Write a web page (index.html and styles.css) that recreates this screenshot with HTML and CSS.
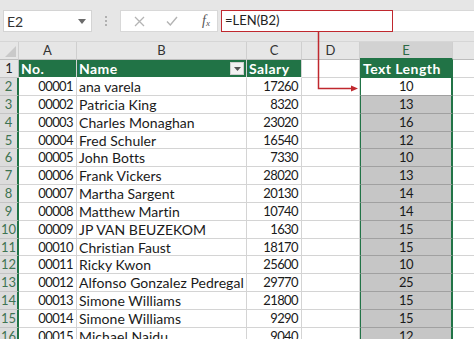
FILE: index.html
```html
<!DOCTYPE html>
<html>
<head>
<meta charset="utf-8">
<link rel="stylesheet" href="styles.css">
</head>
<body>
<div class="app">
  <div class="toolbar">
    <div class="namebox"><span>E2</span><svg class="caret" width="8" height="5" viewBox="0 0 8 5"><path d="M0 0H8L4 5Z" fill="#6b6b6b"/></svg></div>
    <div class="sep"><i></i><i></i><i></i></div>
    <div class="fxbox">
      <svg class="ico" width="11" height="11" viewBox="0 0 11 11"><path d="M1 1L10 10M10 1L1 10" stroke="#b4b4b4" stroke-width="1.3" fill="none"/></svg>
      <svg class="ico" width="12" height="10" viewBox="0 0 12 10"><path d="M1 5.5L4.3 9L11 1" stroke="#b4b4b4" stroke-width="1.4" fill="none"/></svg>
      <span class="fx">f<sub>x</sub></span>
    </div>
    <div class="formula"><div class="formula-sel">=LEN(B2)</div></div>
  </div>
  <div class="sheet">
    <div class="corner"><svg width="11" height="11" viewBox="0 0 11 11"><path d="M11 0V11H0Z" fill="#c9c9c9"/></svg></div>
    <div class="ch">A</div><div class="ch">B</div><div class="ch">C</div><div class="ch">D</div><div class="ch ch-sel">E</div><div class="ch ch-last"></div>

    <div class="rh rh1">1</div>
    <div class="c hd">No.</div>
    <div class="c hd hd-name">Name<span class="filter"><svg width="7" height="4" viewBox="0 0 7 4"><path d="M0 0H7L3.5 4Z" fill="#555"/></svg></span></div>
    <div class="c hd">Salary</div>
    <div class="c"></div>
    <div class="c hd hd-e">Text Length</div>
    <div class="c last"></div>

    <div class="rh">2</div><div class="c num">00001</div><div class="c txt">ana varela</div><div class="c num">17260</div><div class="c"></div><div class="c e active">10</div><div class="c last"></div>
    <div class="rh">3</div><div class="c num">00002</div><div class="c txt">Patricia King</div><div class="c num">8320</div><div class="c"></div><div class="c e">13</div><div class="c last"></div>
    <div class="rh">4</div><div class="c num">00003</div><div class="c txt">Charles Monaghan</div><div class="c num">23020</div><div class="c"></div><div class="c e">16</div><div class="c last"></div>
    <div class="rh">5</div><div class="c num">00004</div><div class="c txt">Fred Schuler</div><div class="c num">16540</div><div class="c"></div><div class="c e">12</div><div class="c last"></div>
    <div class="rh">6</div><div class="c num">00005</div><div class="c txt">John Botts</div><div class="c num">7330</div><div class="c"></div><div class="c e">10</div><div class="c last"></div>
    <div class="rh">7</div><div class="c num">00006</div><div class="c txt">Frank Vickers</div><div class="c num">28020</div><div class="c"></div><div class="c e">13</div><div class="c last"></div>
    <div class="rh">8</div><div class="c num">00007</div><div class="c txt">Martha Sargent</div><div class="c num">20130</div><div class="c"></div><div class="c e">14</div><div class="c last"></div>
    <div class="rh">9</div><div class="c num">00008</div><div class="c txt">Matthew Martin</div><div class="c num">10740</div><div class="c"></div><div class="c e">14</div><div class="c last"></div>
    <div class="rh">10</div><div class="c num">00009</div><div class="c txt">JP VAN BEUZEKOM</div><div class="c num">1630</div><div class="c"></div><div class="c e">15</div><div class="c last"></div>
    <div class="rh">11</div><div class="c num">00010</div><div class="c txt">Christian Faust</div><div class="c num">18170</div><div class="c"></div><div class="c e">15</div><div class="c last"></div>
    <div class="rh">12</div><div class="c num">00011</div><div class="c txt">Ricky Kwon</div><div class="c num">25600</div><div class="c"></div><div class="c e">10</div><div class="c last"></div>
    <div class="rh">13</div><div class="c num">00012</div><div class="c txt">Alfonso Gonzalez Pedregal</div><div class="c num">29770</div><div class="c"></div><div class="c e">25</div><div class="c last"></div>
    <div class="rh">14</div><div class="c num">00013</div><div class="c txt">Simone Williams</div><div class="c num">21800</div><div class="c"></div><div class="c e">15</div><div class="c last"></div>
    <div class="rh">15</div><div class="c num">00014</div><div class="c txt">Simone Williams</div><div class="c num">9290</div><div class="c"></div><div class="c e">15</div><div class="c last"></div>
    <div class="rh">16</div><div class="c num">00015</div><div class="c txt">Michael Naidu</div><div class="c num">9040</div><div class="c"></div><div class="c e">12</div><div class="c last"></div>
  </div>
  <svg class="arrow" width="474" height="339" viewBox="0 0 474 339">
    <path d="M318.5 32V88.5H352" stroke="#c0282e" stroke-width="1.5" fill="none"/>
    <path d="M351 85.5L358 88.5L351 91.5Z" fill="#c0282e"/>
  </svg>
</div>
</body>
</html>
```
FILE: styles.css
```css
* { box-sizing: border-box; }
html, body { margin: 0; padding: 0; }
body {
  width: 474px;
  height: 339px;
  overflow: hidden;
  background: #ffffff;
  font-family: Lato, "Liberation Sans", sans-serif;
  color: #1a1a1a;
}
.app { position: relative; width: 474px; height: 339px; overflow: hidden; }

.toolbar {
  display: flex;
  align-items: flex-start;
  height: 42px;
  padding-top: 10px;
  background: #e6e6e6;
  border-bottom: 1px solid #d6d6d6;
}
.namebox {
  margin-left: 3px;
  width: 89px;
  height: 22px;
  background: #fff;
  border: 1px solid #d4d4d4;
  display: flex;
  align-items: center;
  justify-content: space-between;
  padding: 0 5px 0 3px;
  font-size: 14px;
  color: #333;
}
.caret { margin-top: 1px; }
.sep {
  width: 28px;
  height: 22px;
  display: flex;
  flex-direction: column;
  align-items: center;
  justify-content: center;
  gap: 2px;
}
.sep i { display: block; width: 2px; height: 2px; background: #b0b0b0; }
.fxbox {
  width: 98px;
  height: 22px;
  background: #fff;
  border: 1px solid #d8d8d8;
  display: flex;
  align-items: center;
  padding-left: 13px;
  gap: 21px;
}
.fx {
  font-family: "Liberation Serif", serif;
  font-style: italic;
  font-size: 14px;
  color: #555;
  margin-left: 3px;
}
.fx sub { font-size: 9px; vertical-align: -1px; }
.formula {
  margin-left: 3px;
  flex: 1;
  height: 22px;
  background: #fff;
  border-top: 1px solid #d8d8d8;
  border-bottom: 1px solid #d8d8d8;
}
.formula-sel {
  width: 172px;
  height: 22px;
  margin-top: -1px;
  border: 1.5px solid #c0282e;
  font-size: 13px;
  line-height: 19px;
  padding-left: 3px;
  color: #222;
}

.sheet {
  display: grid;
  grid-template-columns: 19px 58px 170px 55px 58px 93px 21px;
  grid-template-rows: 18px 18px repeat(15, 17.85px);
  font-size: 13px;
}
.corner {
  background: #e6e6e6;
  border-right: 1px solid #cfcfcf;
  border-bottom: 1px solid #bdbdbd;
  display: flex;
  align-items: flex-end;
  justify-content: flex-end;
  padding: 0 2px 2px 0;
}
.ch {
  background: #e6e6e6;
  border-right: 1px solid #cfcfcf;
  border-bottom: 1px solid #bdbdbd;
  text-align: center;
  font-size: 13px;
  line-height: 17px;
  color: #333;
}
.ch-sel { background: #d2d2d2; color: #2b6a45; border-bottom: 2px solid #217346; }
.ch-last { border-right: none; }
.rh {
  background: #dcdcdc;
  border-bottom: 1px solid #c4c4c4;
  border-right: 2px solid #217346;
  text-align: center;
  color: #3e7352;
  font-size: 13px;
  line-height: 17px;
}
.rh1 { background: #e6e6e6; color: #222; border-right: 1px solid #bdbdbd; }
.c {
  border-right: 1px solid #d4d4d4;
  border-bottom: 1px solid #d4d4d4;
  padding: 0 2px;
  line-height: 17px;
  white-space: nowrap;
  overflow: visible;
}
.txt { font-size: 14px; letter-spacing: 0.05px; padding-left: 2px; }
.num { text-align: right; font-size: 13px; letter-spacing: -0.6px; padding-right: 3px; }
.hd {
  background: #217346;
  color: #fff;
  font-weight: bold;
  font-size: 14px;
  letter-spacing: 0.45px;
  border-right: 1px solid #d4d4d4;
  border-bottom: 1px solid #ffffff;
  line-height: 18px;
}
.hd-name { position: relative; }
.filter {
  position: absolute;
  right: 2px;
  top: 2px;
  width: 14px;
  height: 13px;
  background: #f2f2f2;
  border: 1px solid #cfcfcf;
  display: flex;
  align-items: center;
  justify-content: center;
}
.hd-e { border-right: none; border-bottom: none; padding-left: 3px; }
.e {
  background: #c6c6c6;
  text-align: center;
  font-size: 13px;
  letter-spacing: -0.5px;
  border-left: 1px solid #217346;
  border-right: 2px solid #217346;
  border-bottom: 1px solid #a0a0a0;
}
.active { background: #fff; border-bottom: 1px solid #a0a0a0; }
.last { border-right: none; }

.arrow { position: absolute; left: 0; top: 0; pointer-events: none; }
```
